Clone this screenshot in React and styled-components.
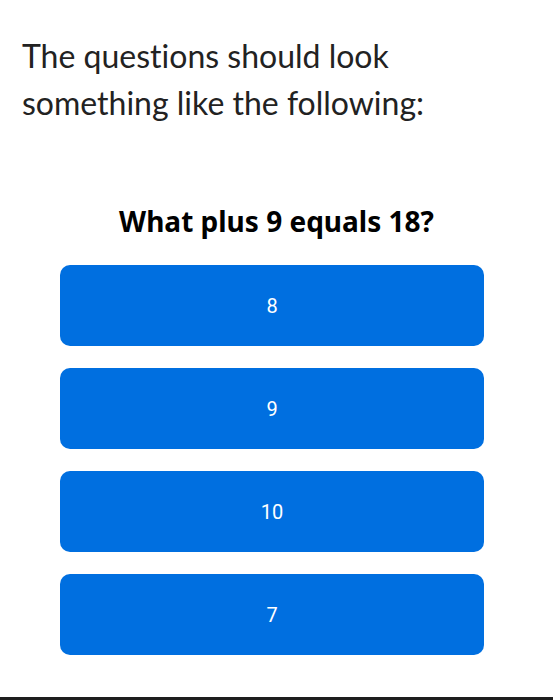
import React from 'react';
import styled, { createGlobalStyle } from 'styled-components';

const GlobalStyle = createGlobalStyle`
  html, body {
    margin: 0;
    padding: 0;
    background: #fff;
  }
`;

const Page = styled.div`
  min-height: 100vh;
  box-sizing: border-box;
  display: flex;
  flex-direction: column;
  border-bottom: solid 3px #1e1e1e;
`;

const Intro = styled.p`
  margin: 0;
  padding: 32px 0 0 22px;
  font-family: Lato, sans-serif;
  font-size: 32px;
  line-height: 47px;
  font-variant-ligatures: none;
  color: #222;
`;

const Quiz = styled.div`
  margin-top: 78px;
  display: flex;
  flex-direction: column;
`;

const Question = styled.h2`
  margin: 0 0 27px;
  text-align: center;
  font-family: 'Noto Sans', sans-serif;
  font-weight: 700;
  font-size: 28px;
  line-height: 34px;
  color: #000;
`;

const Answers = styled.div`
  width: 424px;
  margin-left: 60px;
  display: flex;
  flex-direction: column;
  gap: 22px;
`;

const Answer = styled.button`
  height: 81px;
  border: none;
  border-radius: 10px;
  background: #006fe0;
  color: #fff;
  font-family: Roboto, sans-serif;
  font-size: 20px;
  cursor: pointer;
`;

const answers = ['8', '9', '10', '7'];

const App = () => (
  <Page>
    <GlobalStyle />
    <Intro>
      The questions should look
      <br />
      something like the following:
    </Intro>
    <Quiz>
      <Question>What plus 9 equals 18?</Question>
      <Answers>
        {answers.map(a => (
          <Answer key={a}>{a}</Answer>
        ))}
      </Answers>
    </Quiz>
  </Page>
);

export default App;
